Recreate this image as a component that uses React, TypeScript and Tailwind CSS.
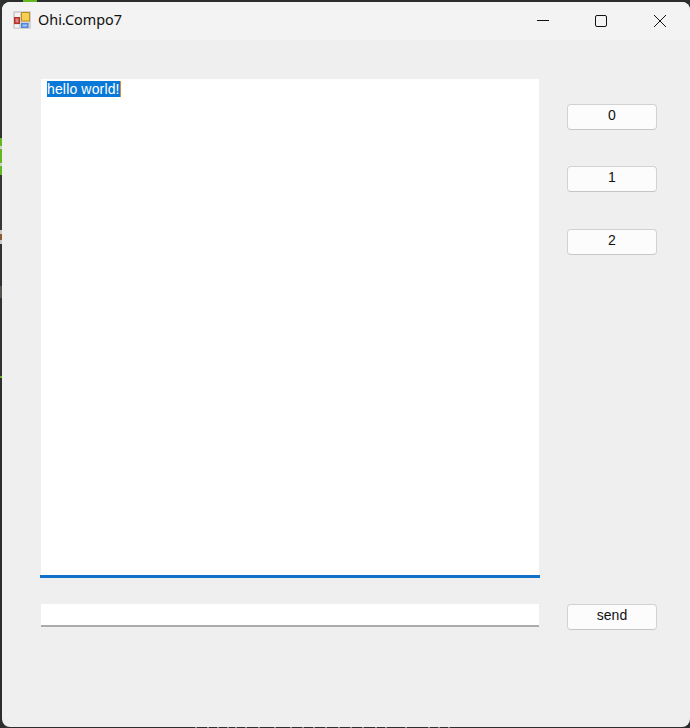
const BOTTOM_TICKS = [195, 207, 217, 227, 235, 245, 258, 274, 290, 302, 313, 325, 338, 350, 362, 375, 385, 405, 428, 438, 448]

function AppIcon() {
  return (
    <svg width="18" height="18" viewBox="0 0 18 18" aria-hidden="true">
      <rect width="18" height="18" rx="1" fill="#d2d2d2" />
      <rect x="2" y="2" width="5" height="4" fill="#f2f2f2" />
      <rect x="2" y="13.5" width="4" height="3" fill="#f4f4f4" />
      <rect x="1" y="6" width="6" height="7" fill="#b5332a" />
      <rect x="2.5" y="7.5" width="3" height="4" fill="#e08a7e" />
      <rect x="8" y="1" width="9" height="9.5" fill="#b98e24" />
      <rect x="9" y="2" width="7" height="7.5" fill="#f8cf4e" />
      <rect x="8" y="12" width="7.5" height="5" fill="#4f86dc" />
      <rect x="9.5" y="13.5" width="4.5" height="2" fill="#a9c8f4" />
    </svg>
  )
}

function WinButton({ label }: { label: string }) {
  return (
    <button
      type="button"
      className="h-[26px] w-[90px] rounded-[4px] border border-[#d2d2d2] border-b-[#c6c6c6] bg-[#fcfcfc] pb-[4px] text-[14px] leading-[20px] text-[#111]"
    >
      {label}
    </button>
  )
}

export default function App() {
  return (
    <div className="flex h-[728px] w-[690px] overflow-hidden bg-[#2c2d2e] font-['Liberation_Sans',sans-serif]">
      {/* desktop showing behind the window */}
      <div className="flex w-[2px] shrink-0 flex-col">
        <div className="h-[138px] bg-[#2f3133]" />
        <div className="h-[8px] bg-[#62b81e]" />
        <div className="h-[3px] bg-[#cfd6c6]" />
        <div className="h-[14px] bg-[#62b81e]" />
        <div className="h-[3px] bg-[#cfd6c6]" />
        <div className="h-[9px] bg-[#62b81e]" />
        <div className="h-[55px] bg-[#34363a]" />
        <div className="h-[4px] bg-[#c9c9c9]" />
        <div className="h-[6px] bg-[#8a5a34]" />
        <div className="h-[4px] bg-[#c9c9c9]" />
        <div className="h-[42px] bg-[#2f3133]" />
        <div className="h-[12px] bg-[#56534e]" />
        <div className="h-[78px] bg-[#2f3133]" />
        <div className="h-[2px] bg-[#62b81e]" />
        <div className="flex-1 bg-[#2b2d2f]" />
      </div>

      <div className="flex min-w-0 flex-1 flex-col">
        <div className="flex h-[2px] shrink-0">
          <div className="ml-[21px] h-[2px] w-[14px] bg-[#62b81e]" />
        </div>

        <div className="flex min-h-0 flex-1 flex-col overflow-hidden rounded-[8px] bg-[#efefef]">
          {/* title bar */}
          <div className="flex h-[38px] shrink-0 items-center bg-[#f3f3f3] pl-[11px] pr-[13px]">
            <div className="mb-[2px] flex items-center">
              <AppIcon />
              <span className="ml-[7px] font-['Noto_Sans',sans-serif] text-[14.4px] text-[#111]">Ohi.Compo7</span>
            </div>
            <div className="ml-auto flex items-center">
              <svg width="59" height="38" viewBox="0 0 59 38" aria-hidden="true">
                <line x1="35" y1="18.5" x2="47" y2="18.5" stroke="#111" />
              </svg>
              <svg width="58" height="38" viewBox="0 0 58 38" aria-hidden="true">
                <rect x="34.5" y="13.5" width="11" height="11" rx="1.5" fill="none" stroke="#111" />
              </svg>
              <svg width="58" height="38" viewBox="0 0 58 38" aria-hidden="true">
                <path d="M35 13l12 12M47 13L35 25" stroke="#111" fill="none" />
              </svg>
            </div>
          </div>

          {/* form body */}
          <div className="flex flex-1 pl-[38px] pt-[39px]">
            <div className="flex w-[500px] flex-col">
              <div className="ml-px h-[496px] w-[498px] bg-white pl-[6px] pt-[2px]">
                <span className="block w-fit border-r border-r-[#e08a3c] bg-[#0a78d7] text-[14px] leading-[16px] tracking-[0.15px] text-white">
                  hello world!
                </span>
              </div>
              <div className="h-[3px] w-[500px] bg-[#1170c8]" />
              <div className="ml-px mt-[26px] h-[23px] w-[498px] border-b-2 border-b-[#ababab] bg-white" />
            </div>

            <div className="ml-[27px] flex flex-col">
              <div className="mt-[25px] flex flex-col gap-[36px]">
                <WinButton label="0" />
                <WinButton label="1" />
                <div className="mt-px flex">
                  <WinButton label="2" />
                </div>
              </div>
              <div className="mt-[349px] flex">
                <WinButton label="send" />
              </div>
            </div>
          </div>
        </div>

        {/* taskbar thumbnails peeking under the window */}
        <div className="flex h-[1px] shrink-0">
          {BOTTOM_TICKS.map((x, i) => (
            <div
              key={x}
              className="h-[1px] w-[2px] bg-[#8f8f8f]"
              style={{ marginLeft: i === 0 ? x - 2 : x - BOTTOM_TICKS[i - 1] - 2 }}
            />
          ))}
        </div>
      </div>
    </div>
  )
}
